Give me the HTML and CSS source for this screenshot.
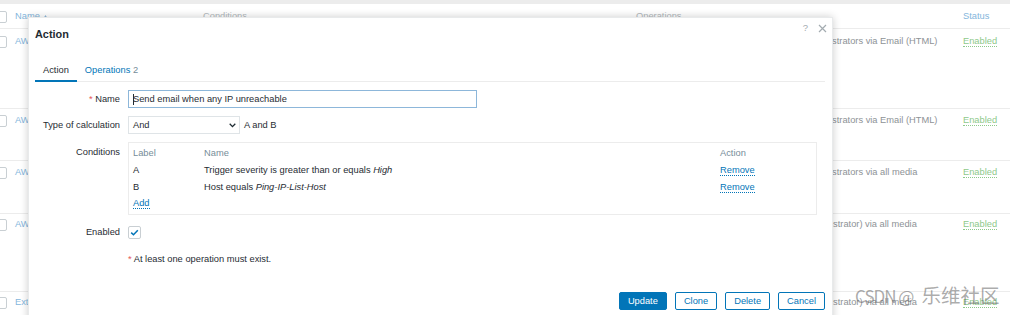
FILE: index.html
```html
<!DOCTYPE html>
<html lang="en">
<head>
<meta charset="utf-8">
<title>Action</title>
<link rel="stylesheet" href="styles.css">
</head>
<body>
<div class="page">
  <div class="topbar"></div>
  <div class="row head">
    <div class="c-check"><span class="cb"></span></div>
    <div class="c-name"><span class="lnk">Name</span><svg class="sort" width="5" height="4" viewBox="0 0 5 4"><path d="M0 4 L2.5 0 L5 4 Z" fill="#8fb9da"/></svg></div>
    <div class="c-cond muted">Conditions</div>
    <div class="c-ops muted">Operations</div>
    <div class="c-status"><span class="lnk">Status</span></div>
  </div>
  <div class="row r-79">
    <div class="c-check"><span class="cb"></span></div>
    <div class="c-name"><span class="lnk">AWS-Trigger</span></div>
    <div class="c-cond"></div>
    <div class="c-ops op">Send message to user groups: Zabbix administrators via Email (HTML)</div>
    <div class="c-status"><span class="ok">Enabled</span></div>
  </div>
  <div class="row r-51">
    <div class="c-check"><span class="cb"></span></div>
    <div class="c-name"><span class="lnk">AWS-Problem</span></div>
    <div class="c-cond"></div>
    <div class="c-ops op">Send message to user groups: Zabbix administrators via Email (HTML)</div>
    <div class="c-status"><span class="ok">Enabled</span></div>
  </div>
  <div class="row r-52">
    <div class="c-check"><span class="cb"></span></div>
    <div class="c-name"><span class="lnk">AWS-Media</span></div>
    <div class="c-cond"></div>
    <div class="c-ops op">Send message to user groups: Zabbix administrators via all media</div>
    <div class="c-status"><span class="ok">Enabled</span></div>
  </div>
  <div class="row r-77">
    <div class="c-check"><span class="cb"></span></div>
    <div class="c-name"><span class="lnk">AWS-Admin</span></div>
    <div class="c-cond"></div>
    <div class="c-ops op">Send message to user: Admin (Zabbix Administrator) via all media</div>
    <div class="c-status"><span class="ok">Enabled</span></div>
  </div>
  <div class="row r-last">
    <div class="c-check"><span class="cb"></span></div>
    <div class="c-name"><span class="lnk">Extra</span></div>
    <div class="c-cond"></div>
    <div class="c-ops op">Send message to user: Admin (Zabbix Administrator) via all media</div>
    <div class="c-status"><span class="ok">Enabled</span></div>
  </div>
</div>

<div class="dialog">
  <div class="dlg-head">
    <h4 class="dlg-title">Action</h4>
    <div class="dlg-tools">
      <span class="help">?</span>
      <svg class="close" width="9" height="9" viewBox="0 0 9 9"><path d="M1 1 L8 8 M8 1 L1 8" stroke="#a3abb0" stroke-width="1.2" fill="none"/></svg>
    </div>
  </div>
  <ul class="tabs">
    <li class="tab active">Action</li>
    <li class="tab"><span class="tab-link">Operations</span> <span class="count">2</span></li>
  </ul>
  <div class="form">
    <div class="lbl"><span class="req">*</span> Name</div>
    <div class="fld"><div class="txt focus"><span class="caret"></span>Send email when any IP unreachable</div></div>

    <div class="lbl">Type of calculation</div>
    <div class="fld inline">
      <div class="select"><span>And</span><svg width="7" height="5" viewBox="0 0 7 5"><path d="M0.7 0.8 L3.5 3.6 L6.3 0.8" stroke="#1f2c33" stroke-width="1.3" fill="none"/></svg></div>
      <span class="formula">A and B</span>
    </div>

    <div class="lbl lbl-cond">Conditions</div>
    <div class="fld">
      <div class="cond-box">
        <div class="cond-grid">
          <div class="th">Label</div><div class="th">Name</div><div class="th">Action</div>
          <div>A</div><div>Trigger severity is greater than or equals <em>High</em></div><div><span class="link">Remove</span></div>
          <div>B</div><div>Host equals <em>Ping-IP-List-Host</em></div><div><span class="link">Remove</span></div>
          <div><span class="link">Add</span></div><div></div><div></div>
        </div>
      </div>
    </div>

    <div class="lbl lbl-check">Enabled</div>
    <div class="fld fld-check"><span class="check"><svg width="11" height="11" viewBox="0 0 11 11"><path d="M2.2 5.6 L4.5 7.8 L8.8 3.2" stroke="#0275b8" stroke-width="1.5" fill="none"/></svg></span></div>

    <div></div>
    <div class="fld note"><span class="req">*</span> At least one operation must exist.</div>
  </div>
  <div class="dlg-foot">
    <button class="btn primary">Update</button>
    <button class="btn">Clone</button>
    <button class="btn">Delete</button>
    <button class="btn">Cancel</button>
  </div>
</div>

<div class="watermark"><span class="wm-latin">CSDN @</span><span class="wm-cjk">乐维社区</span></div>
</body>
</html>
```

FILE: styles.css
```css
* { box-sizing: border-box; margin: 0; padding: 0; }
html, body { width: 1010px; height: 315px; overflow: hidden; background: #fff; }
body {
  font-family: "Liberation Sans", Arial, sans-serif;
  font-size: 9.3px;
  color: #1f2c33;
  position: relative;
}

/* background page */
.page { width: 1010px; }
.topbar { height: 4px; background: #ececec; }
.row {
  display: grid;
  grid-template-columns: 15px 188px 433px 327px 1fr;
  border-bottom: 1px solid #ececec;
  padding-top: 5px;
  line-height: 12px;
  color: #8d9296;
}
.head { height: 25px; padding-top: 6px; }
.r-79 { height: 80px; padding-top: 6px; }
.r-51 { height: 52px; }
.r-52 { height: 53px; }
.r-77 { height: 78px; padding-top: 4px; }
.r-last { height: 40px; padding-top: 4px; }
.c-check { position: relative; }
.cb {
  display: block;
  width: 12px; height: 12px;
  margin-left: -5px; margin-top: 1px;
  border: 1px solid #c9cfd3;
  border-radius: 2px;
  background: #fff;
}
.c-name { display: flex; align-items: center; gap: 3px; align-self: start; height: 12px; }
.lnk { color: #84b6dc; }
.sort { margin-top: 1px; }
.muted { color: #b3b9bd; }
.op { padding-left: 9px; white-space: nowrap; color: #8d9296; }
.ok { color: #8ec98a; border-bottom: 1px dotted #8ec98a; }

/* dialog */
.dialog {
  position: absolute;
  left: 28px; top: 17px;
  width: 805px; height: 330px;
  background: #fff;
  box-shadow: 0 0 8px rgba(0, 0, 0, 0.2);
  border: 1px solid #e8eaeb;
}
.dlg-head { height: 41px; padding: 10px 7px 0 6px; position: relative; }
.dlg-title { font-size: 10.9px; font-weight: bold; line-height: 13px; color: #1f2c33; }
.dlg-tools {
  position: absolute; right: 5px; top: 4px;
  display: flex; align-items: center; gap: 10px;
  color: #a3abb0; font-size: 9.5px; line-height: 12px;
}

.tabs {
  list-style: none;
  display: flex;
  margin: 0 7px 0 6px;
  border-bottom: 1px solid #ececec;
}
.tab {
  padding: 5px 8px 4px;
  line-height: 12px;
  border-bottom: 2px solid transparent;
  margin-bottom: -1px;
}
.tab.active { border-bottom-color: #0275b8; color: #1f2c33; }
.tab-link { color: #0275b8; }
.count { color: #768d99; }

.form {
  display: grid;
  grid-template-columns: 85px 1fr;
  column-gap: 8px;
  row-gap: 8px;
  padding: 8px 0 0 6px;
}
.lbl { text-align: right; line-height: 12px; padding-top: 3px; color: #1f2c33; white-space: nowrap; }
.lbl-cond { padding-top: 4px; }
.req { color: #e45959; }
.fld { display: flex; align-items: center; }
.fld.inline { gap: 4px; }
.txt {
  width: 349px; height: 18px;
  border: 1px solid #dfe4e7;
  padding: 0 4px;
  line-height: 16px;
  display: flex; align-items: center;
  position: relative;
}
.txt.focus { border-color: #8db7da; }
.caret { display: inline-block; width: 1px; height: 11px; background: #1f2c33; position: absolute; left: 4px; }
.select {
  width: 112px; height: 18px;
  border: 1px solid #dfe4e7;
  padding: 0 3px 0 4px;
  display: flex; align-items: center; justify-content: space-between;
}

.cond-box {
  width: 689px; height: 73px;
  border: 1px solid #ececec;
  padding: 1px 4px 2px;
}
.cond-grid {
  display: grid;
  grid-template-columns: 71px 516px 1fr;
  grid-auto-rows: 17px;
  align-items: center;
  line-height: 12px;
}
.cond-grid > div:nth-child(n+10) { margin-top: -2px; }
.th { color: #768d99; }
.cond-grid em { font-style: italic; }
.link { color: #0275b8; border-bottom: 1px dotted #0275b8; }

.lbl-check { margin-top: 3px; padding-top: 0; line-height: 13px; }
.fld-check { margin-top: 3px; }
.check {
  width: 13px; height: 13px;
  border: 1px solid #c9cfd3;
  border-radius: 2px;
  display: flex; align-items: center; justify-content: center;
}
.note { margin-top: 6px; line-height: 12px; display: block; }

.dlg-foot {
  display: flex; justify-content: flex-end; gap: 8px;
  padding-right: 7px;
  margin-top: 27px;
}
.btn {
  height: 18px;
  padding: 0 8px;
  font-family: inherit;
  font-size: 9.3px;
  background: #fff;
  color: #0275b8;
  border: 1px solid #0275b8;
  border-radius: 2px;
}
.btn.primary { background: #0275b8; color: #fff; }

.watermark {
  position: absolute;
  left: 855px; top: 283px;
  font-family: "Noto Sans CJK SC", "Liberation Sans", sans-serif;
  line-height: 24px;
  color: rgba(100, 100, 100, 0.55);
  white-space: nowrap;
  display: flex; align-items: baseline;
}
.wm-latin { font-size: 17px; letter-spacing: -1px; margin-right: 8px; }
.wm-cjk { font-size: 19.5px; }
```
